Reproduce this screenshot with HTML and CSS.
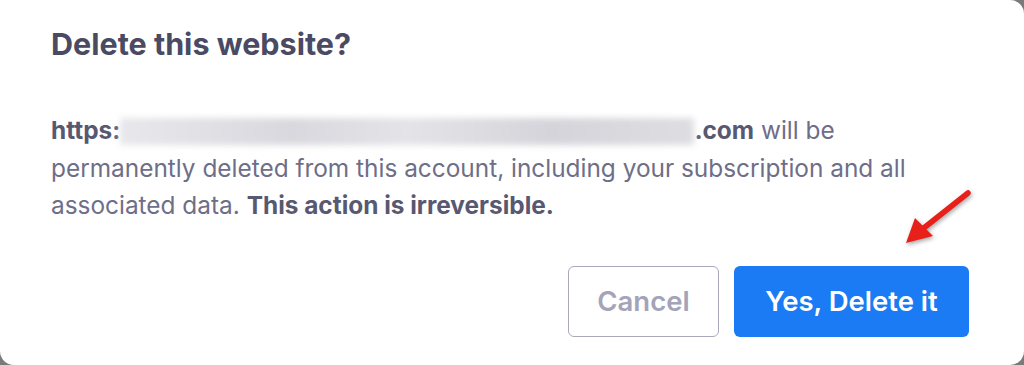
FILE: index.html
```html
<!DOCTYPE html>
<html lang="en">
<head>
    <meta charset="UTF-8">
    <title>Delete this website?</title>
    <link rel="stylesheet" href="styles.css">
</head>
<body>
    <div class="modal">
        <h2 class="modal-title">Delete this website?</h2>
        <p class="modal-text">
            <strong>https:<span class="blurred"></span>.com</strong> will be
            permanently deleted from this account, including your subscription and all
            associated data. <strong>This action is irreversible.</strong>
        </p>
        <div class="modal-actions">
            <button class="btn btn-cancel">Cancel</button>
            <button class="btn btn-delete">Yes, Delete it</button>
        </div>
        <svg class="arrow" width="80" height="70" viewBox="0 0 80 70">
            <line x1="66" y1="8" x2="18" y2="46" stroke="#e8201a" stroke-width="5.5" stroke-linecap="round"/>
            <polygon points="4,58 13,33 31,51" fill="#e8201a"/>
        </svg>
    </div>
</body>
</html>
```

FILE: styles.css
```css
body {
    margin: 0;
    background: #7a7a7a;
    font-family: Inter, "Liberation Sans", sans-serif;
    overflow: hidden;
}
.modal {
    position: relative;
    width: 1024px;
    height: 365px;
    box-sizing: border-box;
    background: #fff;
    border-radius: 0 14px 14px 14px;
    padding: 24px 55px 0 51px;
}
.modal-title {
    margin: 0;
    font-size: 30.5px;
    font-weight: 700;
    color: #4a4a63;
    line-height: 40px;
}
.modal-text {
    margin: 48px 0 0;
    font-size: 24.4px;
    line-height: 37.5px;
    color: #6e6e88;
}
.modal-text strong {
    color: #585871;
}
.blurred {
    display: inline-block;
    width: 574px;
    height: 27px;
    background: linear-gradient(90deg, #e8e8ec, #d8d8de 30%, #e4e4e8 50%, #d4d4da 75%, #dedee2);
    filter: blur(3px);
    vertical-align: -6px;
}
.modal-actions {
    display: flex;
    justify-content: flex-end;
    gap: 15px;
    margin-top: 41px;
}
.btn {
    height: 71px;
    font-family: inherit;
    font-size: 27.5px;
    font-weight: 600;
    border-radius: 6px;
    cursor: pointer;
}
.btn-cancel {
    width: 151px;
    background: #fff;
    border: 1.5px solid #a9a9bb;
    color: #a4a4b8;
}
.btn-delete {
    width: 235px;
    background: #1a7bf4;
    border: none;
    color: #fff;
}
.arrow {
    position: absolute;
    left: 902px;
    top: 185px;
    filter: drop-shadow(1px 2px 2px rgba(0,0,0,0.35));
}
```
